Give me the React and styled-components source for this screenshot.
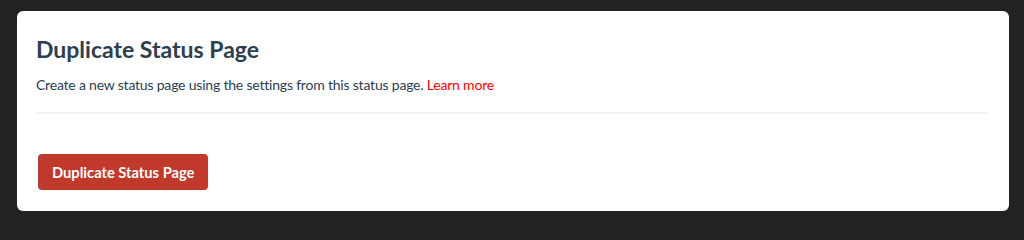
import React from "react";
import styled, { createGlobalStyle } from "styled-components";

const GlobalStyle = createGlobalStyle`
  html, body {
    margin: 0;
    padding: 0;
    background: #222222;
    overflow: hidden;
  }
  body {
    font-family: Lato, "Liberation Sans", sans-serif;
  }
`;

const Page = styled.div`
  height: 223px;
  box-sizing: border-box;
  padding: 11px 15px 12px 17px;
`;

const Card = styled.section`
  display: flex;
  flex-direction: column;
  align-items: flex-start;
  background: #fff;
  border-radius: 6px;
  padding: 23px 21px 19px 19px;
  height: 200px;
  box-sizing: border-box;
  overflow: hidden;
`;

const Title = styled.h2`
  margin: 0;
  font-size: 23px;
  font-weight: 700;
  color: #2c3e50;
  line-height: 30px;
`;

const Description = styled.p`
  margin: 11px 0 0;
  font-size: 14px;
  letter-spacing: -0.2px;
  color: #2c3e50;
  line-height: 20px;
`;

const LearnMore = styled.a`
  color: #ff0000;
  text-decoration: none;
`;

const Divider = styled.hr`
  align-self: stretch;
  border: none;
  border-top: 2px solid #f2f2f2;
  margin: 17px 0 40px;
`;

const Button = styled.button`
  background: #c0392b;
  color: #fff;
  border: none;
  border-radius: 4px;
  height: 36px;
  padding: 0 14px;
  margin-left: 2px;
  font-family: inherit;
  font-size: 14.7px;
  font-weight: 700;
  cursor: pointer;
`;

export default function App() {
  return (
    <Page>
      <GlobalStyle />
      <Card>
        <Title>Duplicate Status Page</Title>
        <Description>
          Create a new status page using the settings from this status page.{" "}
          <LearnMore href="#">Learn more</LearnMore>
        </Description>
        <Divider />
        <Button>Duplicate Status Page</Button>
      </Card>
    </Page>
  );
}
